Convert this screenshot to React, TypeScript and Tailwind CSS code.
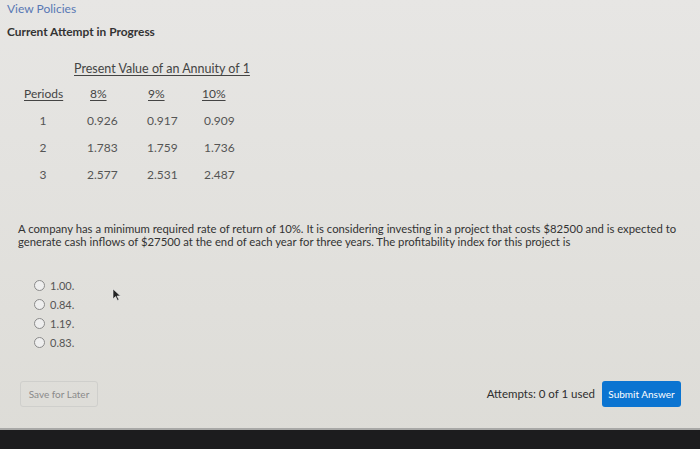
import React from "react";

const rows = [
  ["1", "0.926", "0.917", "0.909"],
  ["2", "1.783", "1.759", "1.736"],
  ["3", "2.577", "2.531", "2.487"],
];

const options = ["1.00.", "0.84.", "1.19.", "0.83."];

export default function App() {
  return (
    <div
      className="w-[700px] h-[449px] overflow-hidden flex flex-col bg-gradient-to-b from-[#e7e6e4] to-[#dddcd7] text-[#3a3a3a]"
      style={{ fontFamily: "Lato, 'Open Sans', sans-serif" }}
    >
      <div className="flex-1 flex flex-col">
        <div className="pl-[7px] pt-[2px] text-[12px] leading-[14px] text-[#5878b4]">View Policies</div>
        <div className="pl-[7px] pt-[9px] text-[11.9px] leading-[14px] font-bold text-[#333]">
          Current Attempt in Progress
        </div>

        <div className="pl-[74px] pt-[22px] text-[12.5px] leading-[15px] text-[#444] underline underline-offset-2">
          Present Value of an Annuity of 1
        </div>

        <div className="pl-[24px] pt-[11px] flex flex-col text-[12px] leading-[14px] text-[#444]">
          <div className="flex">
            <div className="w-[64px] underline underline-offset-2">Periods</div>
            <div className="w-[58px] pl-[2px] underline underline-offset-2">8%</div>
            <div className="w-[54px] pl-[2px] underline underline-offset-2">9%</div>
            <div className="pl-[2px] underline underline-offset-2">10%</div>
          </div>
          {rows.map((r) => (
            <div key={r[0]} className="flex mt-[13px] text-[#555]">
              <div className="w-[38px] text-center">{r[0]}</div>
              <div className="w-[60px] pl-[25px] box-content">{r[1]}</div>
              <div className="w-[57px]">{r[2]}</div>
              <div>{r[3]}</div>
            </div>
          ))}
        </div>

        <p className="pl-[18px] pr-[10px] pt-[40px] text-[11.3px] leading-[13px] text-[#333]">
          A company has a minimum required rate of return of 10%. It is considering investing in a project that costs $82500 and is expected to
          <br />
          generate cash inflows of $27500 at the end of each year for three years. The profitability index for this project is
        </p>

        <div className="pl-[34px] pt-[28px] flex flex-col relative">
          {options.map((o) => (
            <label key={o} className="h-[19px] flex items-center gap-[5px] text-[11px] leading-[14px] text-[#555]">
              <span className="w-[11px] h-[11px] rounded-full border border-[#8a8a8a] bg-[#eee]" />
              {o}
            </label>
          ))}
          <svg className="absolute left-[112px] top-[40px]" width="9" height="13" viewBox="0 0 9 13">
            <path d="M1 1 L1 11 L3.5 8.5 L5.5 12.5 L7 11.8 L5 8 L8.5 8 Z" fill="#222" stroke="#eee" strokeWidth="0.6" />
          </svg>
        </div>

        <div className="mt-auto mb-[21px] flex items-center pl-[20px] pr-[19px]">
          <button className="w-[78px] h-[26px] rounded-[3px] border border-[#cfcfcc] text-[10px] text-[#8a8a8a] bg-transparent">
            Save for Later
          </button>
          <div className="ml-auto text-[11.5px] text-[#2e2e2e] mr-[7px]">Attempts: 0 of 1 used</div>
          <button className="w-[79px] h-[26px] rounded-[3px] bg-[#0b74d1] text-white text-[10px]">
            Submit Answer
          </button>
        </div>
      </div>
      <div className="h-[2px] bg-[#a8a8a6]" />
      <div className="h-[19px] bg-[#1c1c1e]" />
    </div>
  );
}
